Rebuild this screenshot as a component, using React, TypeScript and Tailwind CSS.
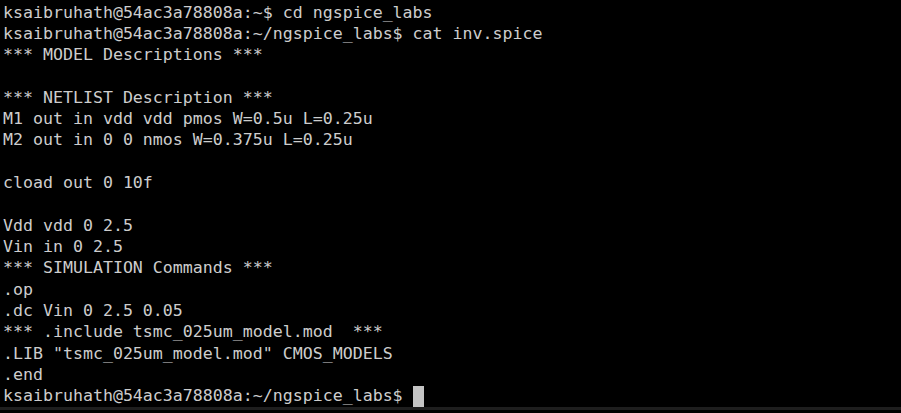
import React from 'react'

const lines: string[] = [
  'ksaibruhath@54ac3a78808a:~$ cd ngspice_labs',
  'ksaibruhath@54ac3a78808a:~/ngspice_labs$ cat inv.spice',
  '*** MODEL Descriptions ***',
  '',
  '*** NETLIST Description ***',
  'M1 out in vdd vdd pmos W=0.5u L=0.25u',
  'M2 out in 0 0 nmos W=0.375u L=0.25u',
  '',
  'cload out 0 10f',
  '',
  'Vdd vdd 0 2.5',
  'Vin in 0 2.5',
  '*** SIMULATION Commands ***',
  '.op',
  '.dc Vin 0 2.5 0.05',
  '*** .include tsmc_025um_model.mod  ***',
  '.LIB "tsmc_025um_model.mod" CMOS_MODELS',
  '.end',
]

function App() {
  return (
    <div className='w-[901px] h-[413px] bg-black overflow-hidden flex flex-col'>
      <div className='flex-1 pl-[3px] pt-[1.5px] text-[#cdcdcd] text-[16.6px] leading-[21.33px] font-["DejaVu_Sans_Mono",monospace] whitespace-pre'>
        {lines.map((line, i) => (
          <div key={i} className='h-[21.33px]'>{line}</div>
        ))}
        <div className='h-[21.33px] flex items-center'>
          <span>ksaibruhath@54ac3a78808a:~/ngspice_labs$ </span>
          <span className='inline-block w-[11px] h-[21px] bg-[#c4c4c4]' />
        </div>
      </div>
      <div className='h-[3px] bg-[#1e1e1e] mb-[3px]' />
    </div>
  )
}

export default App
